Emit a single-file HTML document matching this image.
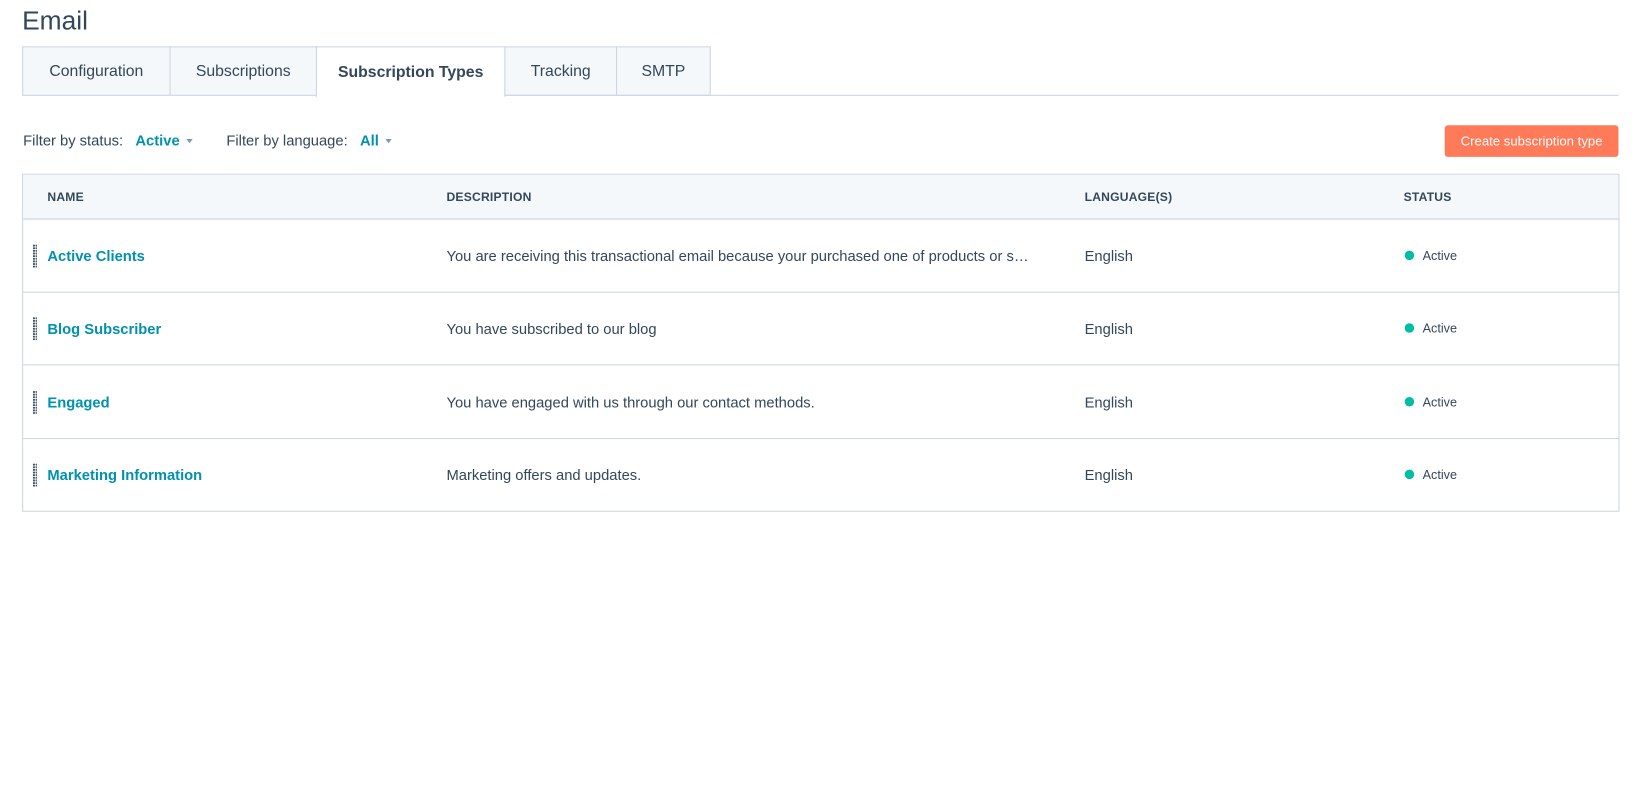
<!DOCTYPE html>
<html><head><style>
*{box-sizing:border-box;margin:0;padding:0}
body{width:1651px;height:802px;background:#fff;font-family:"Liberation Sans",sans-serif;color:#33475b;position:relative;overflow:hidden}
#w{position:absolute;left:0;top:0;width:1568px;height:762px;transform:scale(1.053);transform-origin:0 0}
h1{position:absolute;left:21px;top:6px;font-size:25px;font-weight:300;color:#33475b}
.tab{position:absolute;top:44px;height:47px;background:#f5f8fa;border:1px solid #cbd6e2;font-size:15px;display:flex;align-items:center;justify-content:center;color:#33475b}
.tab.act{background:#fff;border-bottom:none;font-weight:bold;height:48px}
.line{position:absolute;left:479px;top:90px;width:1058px;height:1px;background:#cbd6e2}
.f{position:absolute;top:125px;font-size:14px}
.f b{color:#0091ae;font-weight:bold}
.car{display:inline-block;border-left:3.5px solid transparent;border-right:3.5px solid transparent;border-top:4px solid #7c98b6;vertical-align:middle;margin-left:6px}
.btn{position:absolute;left:1372px;top:119px;width:165px;height:30px;background:#ff7a59;border-radius:3px;color:#fff;font-size:12.5px;display:flex;align-items:center;justify-content:center}
.tbl{position:absolute;left:21px;top:165px;width:1517px;height:321px;border:1px solid #cbd6e2}
.hd{position:absolute;left:0;top:0;width:100%;height:43px;background:#f5f8fa;border-bottom:2px solid #dfe3eb}
.th{position:absolute;top:16px;font-size:11.5px;font-weight:bold;letter-spacing:.2px}
.row{position:absolute;left:0;width:100%;height:70px;border-bottom:1px solid #cbd6e2}
.row:last-child{border-bottom:none}
.c{position:absolute;top:27px;font-size:14px}
.nm{color:#0091ae;font-weight:bold}
.dots{position:absolute;left:9px;top:24px;width:4px;height:22px;background-image:radial-gradient(circle,#33475b 0.9px,transparent 1.1px);background-size:2.5px 2.5px}
.st{font-size:12px;top:28px}
.st:before{content:"";display:inline-block;width:9px;height:9px;border-radius:50%;background:#00bda5;margin-right:8px;vertical-align:-0px}
</style></head><body><div id="w">
<h1>Email</h1>
<div class="tab" style="left:21px;width:141px">Configuration</div>
<div class="tab" style="left:161px;width:140px">Subscriptions</div>
<div class="tab act" style="left:300px;width:180px">Subscription Types</div>
<div class="tab" style="left:479px;width:107px">Tracking</div>
<div class="tab" style="left:585px;width:90px">SMTP</div>
<div class="line"></div>
<div class="f" style="left:22px">Filter by status: &nbsp;&nbsp;<b>Active</b><span class="car"></span></div>
<div class="f" style="left:215px">Filter by language: &nbsp;&nbsp;<b>All</b><span class="car"></span></div>
<div class="btn">Create subscription type</div>
<div class="tbl">
<div class="hd">
<div class="th" style="left:23px">NAME</div>
<div class="th" style="left:402px">DESCRIPTION</div>
<div class="th" style="left:1008px">LANGUAGE(S)</div>
<div class="th" style="left:1311px">STATUS</div>
</div>
<div class="row" style="top:42px"><div class="dots"></div><div class="c nm" style="left:23px">Active Clients</div><div class="c" style="left:402px">You are receiving this transactional email because your purchased one of products or s…</div><div class="c" style="left:1008px">English</div><div class="c st" style="left:1312px">Active</div></div>
<div class="row" style="top:111px"><div class="dots"></div><div class="c nm" style="left:23px">Blog Subscriber</div><div class="c" style="left:402px">You have subscribed to our blog</div><div class="c" style="left:1008px">English</div><div class="c st" style="left:1312px">Active</div></div>
<div class="row" style="top:181px"><div class="dots"></div><div class="c nm" style="left:23px">Engaged</div><div class="c" style="left:402px">You have engaged with us through our contact methods.</div><div class="c" style="left:1008px">English</div><div class="c st" style="left:1312px">Active</div></div>
<div class="row" style="top:250px"><div class="dots"></div><div class="c nm" style="left:23px">Marketing Information</div><div class="c" style="left:402px">Marketing offers and updates.</div><div class="c" style="left:1008px">English</div><div class="c st" style="left:1312px">Active</div></div>
</div>
</div></body></html>
